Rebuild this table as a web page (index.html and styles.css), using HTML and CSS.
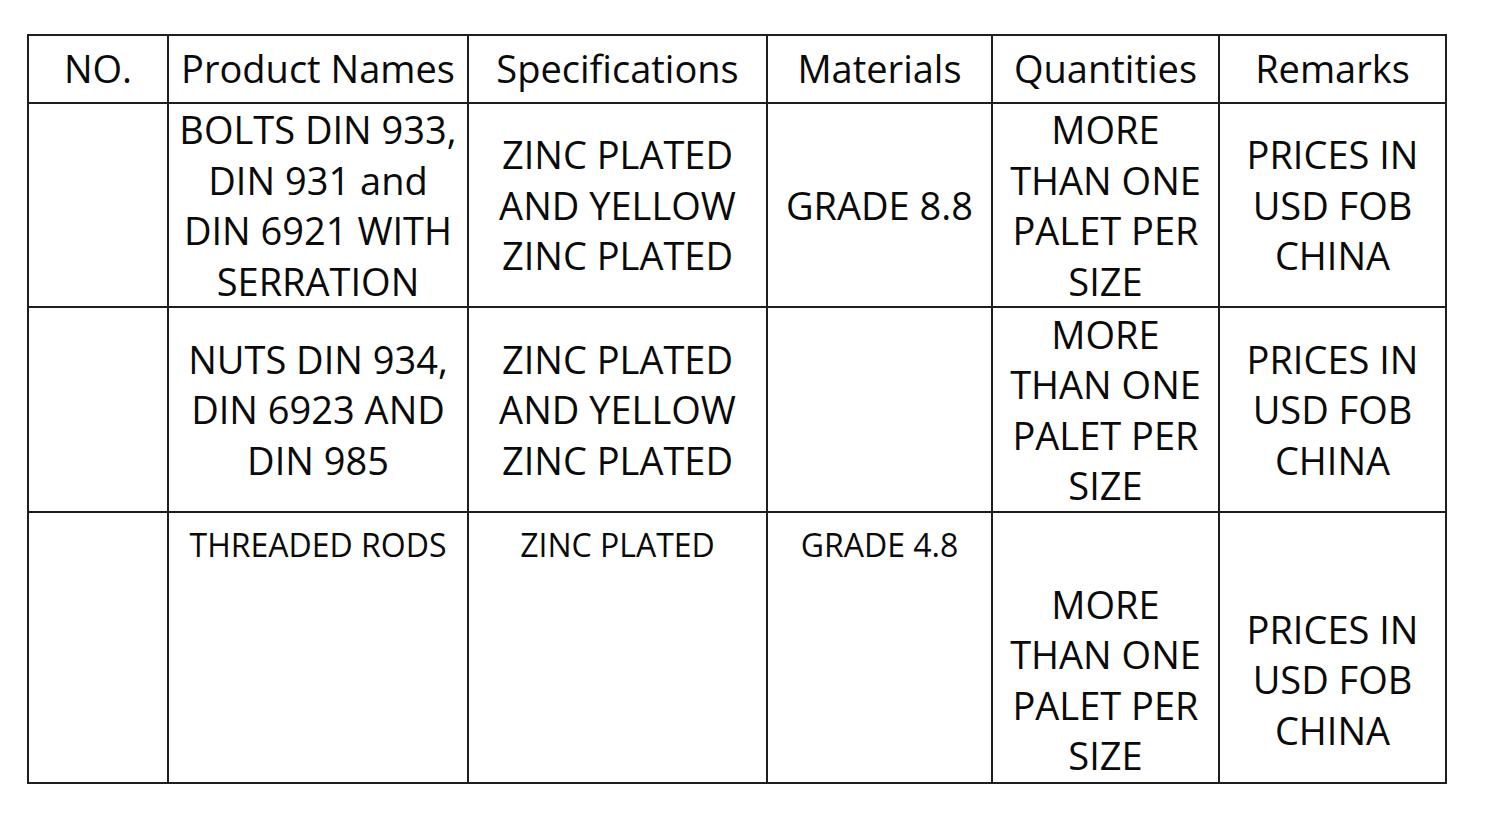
FILE: index.html
```html
<!DOCTYPE html>
<html>
<head>
<meta charset="utf-8">
<link rel="stylesheet" href="styles.css">
</head>
<body>
<div class="page">
<table class="grid">
<colgroup>
<col class="c1"><col class="c2"><col class="c3"><col class="c4"><col class="c5"><col class="c6">
</colgroup>
<tr class="head">
<td>NO.</td><td>Product Names</td><td>Specifications</td><td>Materials</td><td>Quantities</td><td>Remarks</td>
</tr>
<tr class="r1">
<td></td>
<td>BOLTS DIN 933,<br>DIN 931 and<br>DIN 6921 WITH<br>SERRATION</td>
<td>ZINC PLATED<br>AND YELLOW<br>ZINC PLATED</td>
<td>GRADE 8.8</td>
<td>MORE<br>THAN ONE<br>PALET PER<br>SIZE</td>
<td>PRICES IN<br>USD FOB<br>CHINA</td>
</tr>
<tr class="r2">
<td></td>
<td>NUTS DIN 934,<br>DIN 6923 AND<br>DIN 985</td>
<td>ZINC PLATED<br>AND YELLOW<br>ZINC PLATED</td>
<td></td>
<td>MORE<br>THAN ONE<br>PALET PER<br>SIZE</td>
<td>PRICES IN<br>USD FOB<br>CHINA</td>
</tr>
<tr class="r3">
<td></td>
<td class="small">THREADED RODS</td>
<td class="small">ZINC PLATED</td>
<td class="small">GRADE 4.8</td>
<td class="low">MORE<br>THAN ONE<br>PALET PER<br>SIZE</td>
<td class="low">PRICES IN<br>USD FOB<br>CHINA</td>
</tr>
</table>
</div>
</body>
</html>
```

FILE: styles.css
```css
html, body {
  margin: 0;
  padding: 0;
  background: #ffffff;
}
.page {
  padding: 34px 0 0 27px;
}
.grid {
  border-collapse: collapse;
  table-layout: fixed;
  width: 1420px;
  font-family: "Open Sans", "Noto Sans", sans-serif;
  font-size: 38px;
  line-height: 50.5px;
  color: #0a0a0a;
}
.c1 { width: 140px; }
.c2 { width: 300px; }
.c3 { width: 299px; }
.c4 { width: 225px; }
.c5 { width: 227px; }
.c6 { width: 227px; }
.grid td {
  border: 2px solid #1e1e1e;
  text-align: center;
  vertical-align: middle;
  padding: 0;
  white-space: nowrap;
  overflow: hidden;
}
.grid .head td { height: 64px; padding-bottom: 2px; }
.r1 td { height: 202px; }
.r2 td { height: 203px; }
.r3 td { height: 269px; }
.grid td.small {
  vertical-align: top;
  font-size: 32px;
  line-height: 36px;
  padding-top: 14px;
  height: 255px;
}
.grid td.low {
  padding-top: 64px;
  height: 205px;
}
```
